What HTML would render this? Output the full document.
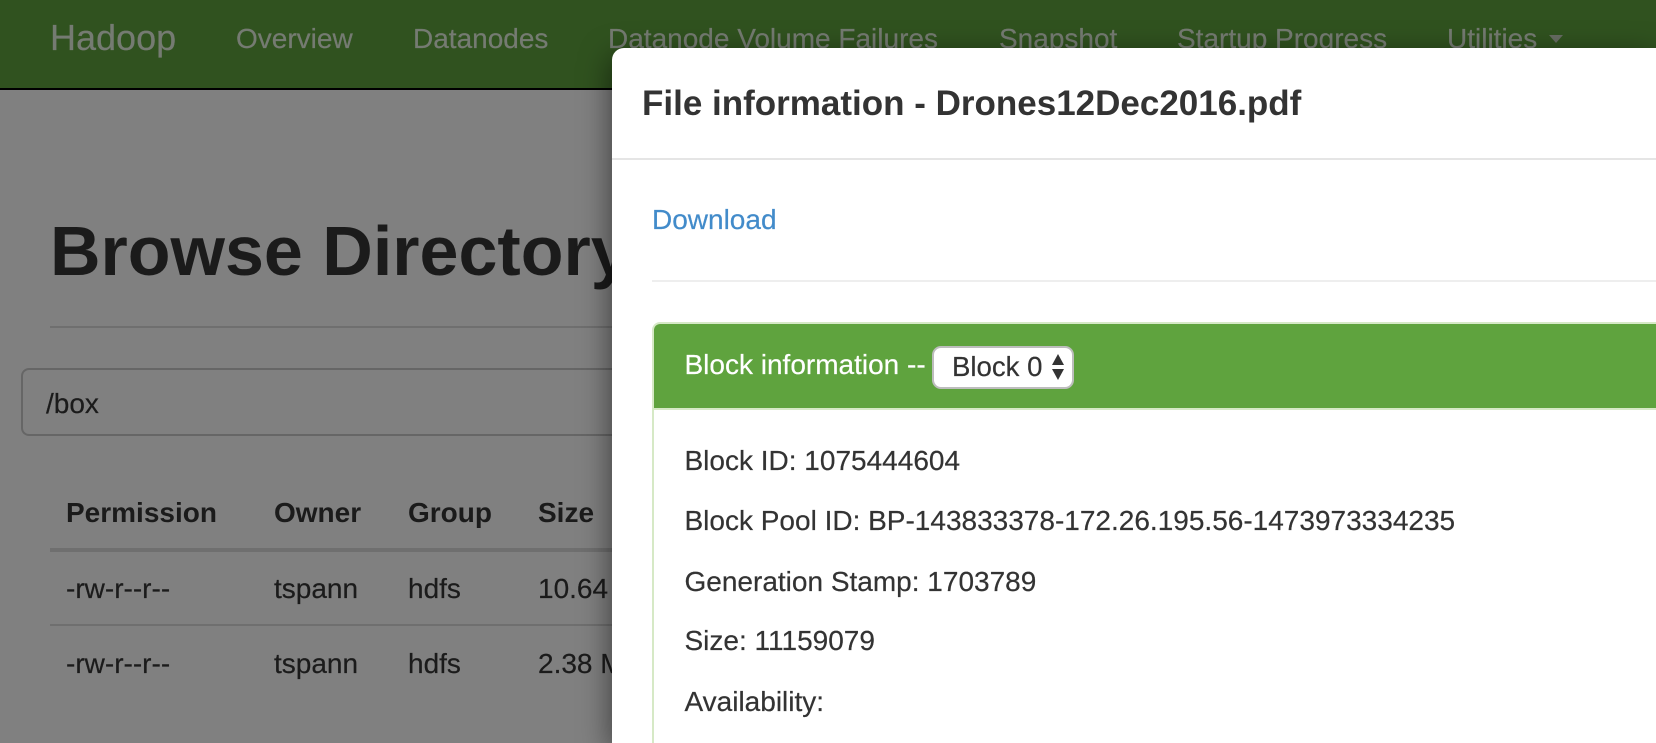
<!DOCTYPE html>
<html lang="en">
<head>
<meta charset="utf-8">
<title>Browse Directory</title>
<style>
html,body{margin:0;padding:0;background:#808080;overflow:hidden;width:1656px;height:743px;}
#page{position:relative;width:1656px;height:743px;overflow:hidden;font-family:"Liberation Sans",Arial,sans-serif;background:#808080;}
.t{position:absolute;white-space:nowrap;line-height:0;font-size:28px;-webkit-text-stroke:.2px currentColor;}
.b{font-weight:bold;-webkit-text-stroke:0;}
.r{position:absolute;}
.nav{color:#757b72;}
.d{color:#1b1b1b;}
.m{color:#333;}
</style>
</head>
<body>
<div id="page">
<div class="r" style="left:0;top:0;width:1656px;height:88px;background:#30521f;"></div>
<div class="r" style="left:0;top:88px;width:1656px;height:2px;background:#000;"></div>
<span class="t nav" style="left:50px;top:38px;font-size:36px;">Hadoop</span>
<span class="t nav" style="left:236px;top:38.9px;">Overview</span>
<span class="t nav" style="left:413px;top:38.9px;">Datanodes</span>
<span class="t nav" style="left:608px;top:38.9px;">Datanode Volume Failures</span>
<span class="t nav" style="left:999px;top:38.9px;">Snapshot</span>
<span class="t nav" style="left:1177px;top:38.9px;">Startup Progress</span>
<span class="t nav" style="left:1447px;top:38.9px;">Utilities</span>
<div class="r" style="left:1549px;top:35px;width:0;height:0;border-left:7px solid transparent;border-right:7px solid transparent;border-top:8px solid #666c62;"></div>

<span class="t b d" style="left:50px;top:251.3px;font-size:70px;">Browse Directory</span>
<div class="r" style="left:50px;top:326px;width:562px;height:2px;background:#6f6f6f;"></div>
<div class="r" style="left:21px;top:368px;width:591px;height:64px;box-sizing:content-box;border:2px solid #666;border-right:0;border-radius:8px 0 0 8px;"></div>
<span class="t d" style="left:46px;top:404.4px;">/box</span>
<span class="t b d" style="left:66px;top:512.9px;">Permission</span>
<span class="t b d" style="left:274px;top:512.9px;">Owner</span>
<span class="t b d" style="left:408px;top:512.9px;">Group</span>
<span class="t b d" style="left:538px;top:512.9px;">Size</span>
<div class="r" style="left:50px;top:548px;width:562px;height:4px;background:#6f6f6f;"></div>
<span class="t d" style="left:66px;top:589.4px;">-rw-r--r--</span>
<span class="t d" style="left:274px;top:589.4px;">tspann</span>
<span class="t d" style="left:408px;top:589.4px;">hdfs</span>
<div class="r" style="left:538px;top:570px;width:74px;height:40px;overflow:hidden;"><span class="t d" style="left:0;top:19.4px;">10.64 MB</span></div>
<div class="r" style="left:50px;top:624px;width:562px;height:2px;background:#6f6f6f;"></div>
<span class="t d" style="left:66px;top:664.4px;">-rw-r--r--</span>
<span class="t d" style="left:274px;top:664.4px;">tspann</span>
<span class="t d" style="left:408px;top:664.4px;">hdfs</span>
<div class="r" style="left:538px;top:645px;width:74px;height:40px;overflow:hidden;"><span class="t d" style="left:0;top:19.4px;">2.38 MB</span></div>

<div class="r" style="left:612px;top:48px;width:1044px;height:695px;background:#fff;border-top-left-radius:12px;box-shadow:-2px 8px 30px rgba(0,0,0,.5);">
  <span class="t b m" style="left:30px;top:55.7px;font-size:35px;">File information - Drones12Dec2016.pdf</span>
  <div class="r" style="left:0;top:110px;width:1044px;height:2px;background:#e5e5e5;"></div>
  <span class="t" style="left:40px;top:171.9px;color:#428bca;">Download</span>
  <div class="r" style="left:40px;top:232px;width:1004px;height:2px;background:#eee;"></div>
  <div class="r" style="left:40px;top:274px;width:1004px;height:421px;border:2px solid #d6e9c6;border-right:0;border-bottom:0;border-radius:8px 0 0 0;box-sizing:border-box;overflow:hidden;">
    <div class="r" style="left:0;top:0;width:1002px;height:84px;background:#5fa33e;"></div>
  </div>
  <div class="r" style="left:40px;top:360px;width:1004px;height:2px;background:#d6e9c6;"></div>
  <span class="t" style="left:72.5px;top:316.9px;color:#fff;">Block information --</span>
  <div class="r" style="left:320px;top:298px;width:142px;height:43px;box-sizing:border-box;background:#fff;border:2px solid #bdbdbd;border-radius:9px;"></div>
  <span class="t m" style="left:340px;top:319.4px;font-size:27.6px;">Block 0</span>
  <div class="r" style="left:440px;top:306px;width:0;height:0;border-left:6px solid transparent;border-right:6px solid transparent;border-bottom:11px solid #333;"></div>
  <div class="r" style="left:440px;top:321px;width:0;height:0;border-left:6px solid transparent;border-right:6px solid transparent;border-top:11px solid #333;"></div>
  <span class="t m" style="left:72.5px;top:413.4px;">Block ID: 1075444604</span>
  <span class="t m" style="left:72.5px;top:473.4px;">Block Pool ID: BP-143833378-172.26.195.56-1473973334235</span>
  <span class="t m" style="left:72.5px;top:533.9px;">Generation Stamp: 1703789</span>
  <span class="t m" style="left:72.5px;top:593.4px;">Size: 11159079</span>
  <span class="t m" style="left:72.5px;top:653.9px;">Availability:</span>
</div>
</div>
</body>
</html>
